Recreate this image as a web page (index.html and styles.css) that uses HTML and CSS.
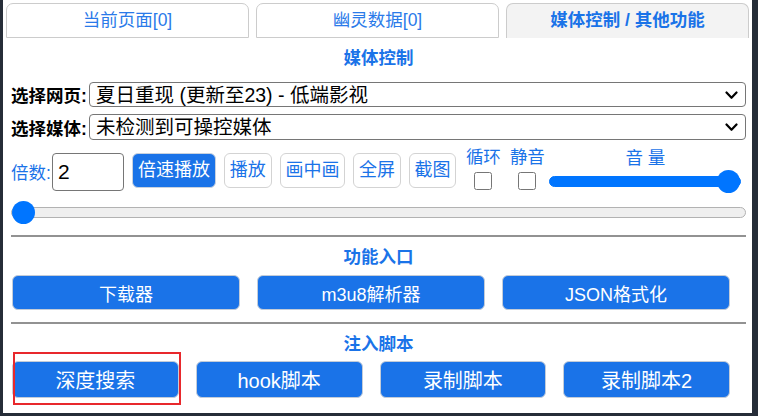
FILE: index.html
```html
<!DOCTYPE html>
<html lang="zh-CN">
<head>
<meta charset="utf-8">
<title>媒体控制</title>
<link rel="stylesheet" href="styles.css">
</head>
<body>
<div class="panel">
  <div class="tabs">
    <div class="tab">当前页面[0]</div>
    <div class="tab">幽灵数据[0]</div>
    <div class="tab active">媒体控制 / 其他功能</div>
  </div>
  <div class="content">
    <div class="heading h-media">媒体控制</div>
    <div class="select-row">
      <label class="sel-label">选择网页:</label>
      <div class="sel-wrap">
        <select class="sel"><option>夏日重现 (更新至23) - 低端影视</option></select>
        <svg class="chev" width="13" height="9" viewBox="0 0 13 9"><path d="M1.5 1.5 L6.5 6.8 L11.5 1.5" fill="none" stroke="#000" stroke-width="2.2" stroke-linecap="round" stroke-linejoin="round"/></svg>
      </div>
    </div>
    <div class="select-row second">
      <label class="sel-label">选择媒体:</label>
      <div class="sel-wrap">
        <select class="sel"><option>未检测到可操控媒体</option></select>
        <svg class="chev" width="13" height="9" viewBox="0 0 13 9"><path d="M1.5 1.5 L6.5 6.8 L11.5 1.5" fill="none" stroke="#000" stroke-width="2.2" stroke-linecap="round" stroke-linejoin="round"/></svg>
      </div>
    </div>
    <div class="controls">
      <span class="rate-label">倍数:</span>
      <input class="rate-input" type="text" value="2">
      <button class="btn-fill">倍速播放</button>
      <button class="btn-line">播放</button>
      <button class="btn-line">画中画</button>
      <button class="btn-line">全屏</button>
      <button class="btn-line">截图</button>
      <div class="check-group g-loop">
        <span class="check-label">循环</span>
        <input class="check" type="checkbox">
      </div>
      <div class="check-group g-mute">
        <span class="check-label">静音</span>
        <input class="check" type="checkbox">
      </div>
      <div class="volume">
        <span class="vol-label">音 量</span>
        <input class="range vol-range" type="range" min="0" max="100" value="100">
      </div>
    </div>
    <input class="range progress" type="range" min="0" max="100" value="0">
    <div class="divider d1"></div>
    <div class="heading h-func">功能入口</div>
    <div class="grid3">
      <button class="btn-big">下载器</button>
      <button class="btn-big">m3u8解析器</button>
      <button class="btn-big">JSON格式化</button>
    </div>
    <div class="divider d2"></div>
    <div class="heading h-inject">注入脚本</div>
    <div class="grid4">
      <button class="btn-big tall">深度搜索</button>
      <button class="btn-big tall">hook脚本</button>
      <button class="btn-big tall">录制脚本</button>
      <button class="btn-big tall">录制脚本2</button>
    </div>
  </div>
  <div class="highlight"></div>
</div>
</body>
</html>
```

FILE: styles.css
```css
html, body {
  margin: 0;
  padding: 0;
}
body {
  width: 758px;
  height: 416px;
  background: #262d38;
  overflow: hidden;
  font-family: "Liberation Sans", "Noto Sans CJK SC", sans-serif;
  font-size: 17.5px;
}
.panel {
  position: relative;
  margin-left: 3px;
  width: 749px;
  height: 413px;
  background: #ffffff;
}
.tabs {
  display: flex;
  gap: 7px;
  padding: 3px 3px 0 3px;
}
.tab {
  width: 241px;
  height: 33px;
  border: 1px solid #cccccc;
  border-radius: 7px 7px 0 0;
  background: #ffffff;
  color: #2a7ae9;
  text-align: center;
  line-height: 33px;
}
.tab.active {
  background: #f3f3f3;
  border-bottom: none;
  height: 34px;
  font-weight: bold;
  color: #1a73e8;
}
.content {
  padding: 0 6px 0 8px;
}
.heading {
  text-align: center;
  font-weight: bold;
  color: #1a73e8;
  height: 24px;
  line-height: 24px;
}
.h-media { margin-top: 8px; }
.select-row {
  display: flex;
  align-items: center;
  margin-top: 12px;
  height: 25px;
}
.select-row.second {
  margin-top: 7px;
  height: 26px;
}
.sel-label {
  width: 78px;
  font-weight: bold;
  color: #000;
  white-space: nowrap;
}
.sel-wrap {
  position: relative;
  flex: 1;
  height: 100%;
}
.sel {
  -webkit-appearance: none;
  appearance: none;
  box-sizing: border-box;
  width: 100%;
  height: 100%;
  font-family: "Liberation Sans", "Noto Sans CJK SC", sans-serif;
  font-size: 19.5px;
  line-height: 22px;
  color: #000;
  border: 1px solid #767676;
  border-radius: 4px;
  background: #fff;
  padding: 0 24px 0 6px;
  margin: 0;
}
.chev {
  position: absolute;
  right: 8px;
  top: 50%;
  margin-top: -4px;
  pointer-events: none;
}
.controls {
  display: flex;
  align-items: center;
  margin-top: 8px;
  height: 44px;
}
.controls > * {
  flex-shrink: 0;
}
.rate-label {
  color: #1a73e8;
  width: 41px;
  margin-top: 3px;
  white-space: nowrap;
}
.rate-input {
  box-sizing: border-box;
  width: 72px;
  height: 38px;
  margin: 3px 0 0 0;
  border: 1px solid #767676;
  border-radius: 4px;
  padding: 0 5px;
  font-family: "Liberation Sans", sans-serif;
  font-size: 21px;
  color: #000;
}
.btn-fill, .btn-line {
  box-sizing: border-box;
  height: 35px;
  border-radius: 6px;
  font-family: "Liberation Sans", "Noto Sans CJK SC", sans-serif;
  font-size: 18px;
  margin: 0;
  line-height: 33px;
  white-space: nowrap;
}
.btn-fill {
  margin-left: 8px;
  padding: 0 5px;
  background: #1a73e8;
  color: #fff;
  border: 1px solid #c9d2de;
}
.btn-line {
  margin-left: 8px;
  padding: 0 4.8px;
  background: #fff;
  color: #1a73e8;
  border: 1px solid #d3d3d3;
}
.check-group {
  display: flex;
  flex-direction: column;
  align-items: center;
  width: 36px;
  margin-top: -4px;
}
.g-loop { margin-left: 9px; }
.g-mute { margin-left: 8px; }
.check-label {
  color: #1a73e8;
  line-height: 20px;
  height: 22px;
  white-space: nowrap;
}
.check {
  width: 18px;
  height: 18px;
  margin: 3px 0 0 0;
}
.volume {
  display: flex;
  flex-direction: column;
  align-items: center;
  margin-left: 4px;
  width: 192px;
}
.vol-label {
  color: #1a73e8;
  line-height: 20px;
  height: 22px;
  white-space: pre;
}
.range {
  -webkit-appearance: none;
  appearance: none;
  background: transparent;
  margin: 0;
  height: 22px;
  display: block;
}
.range::-webkit-slider-runnable-track {
  height: 11px;
  border-radius: 6px;
  background: #efefef;
  border: 1px solid #b2b2b2;
  box-sizing: border-box;
}
.range::-webkit-slider-thumb {
  -webkit-appearance: none;
  appearance: none;
  width: 23px;
  height: 23px;
  border-radius: 50%;
  background: #0075ff;
  border: none;
  margin-top: -7px;
}
.vol-range {
  width: 192px;
  margin-top: 0;
}
.vol-range::-webkit-slider-runnable-track {
  background: #0075ff;
  border: 1px solid #0075ff;
}
.progress {
  width: 735px;
  margin-top: 9px;
  margin-left: 0;
}
.divider {
  height: 0;
  border-top: 2px solid #929292;
  width: 735px;
}
.d1 { margin-top: 12px; }
.d2 { margin-top: 12px; }
.h-func { margin-top: 8px; }
.h-inject { margin-top: 8px; }
.grid3, .grid4 {
  display: grid;
  gap: 17px;
  width: 718px;
  margin-left: 1px;
}
.grid3 {
  grid-template-columns: repeat(3, 1fr);
  margin-top: 6px;
}
.grid4 {
  grid-template-columns: repeat(4, 1fr);
  margin-top: 5px;
}
.btn-big {
  box-sizing: border-box;
  height: 35px;
  background: #1a73e8;
  color: #fff;
  border: 1px solid #c3ccd8;
  border-radius: 6px;
  font-family: "Liberation Sans", "Noto Sans CJK SC", sans-serif;
  font-size: 18px;
  padding: 0;
}
.btn-big.tall {
  height: 37px;
  font-size: 20px;
}
.highlight {
  position: absolute;
  left: 10px;
  top: 352px;
  width: 164px;
  height: 49px;
  border: 2px solid #e8282c;
}
```
